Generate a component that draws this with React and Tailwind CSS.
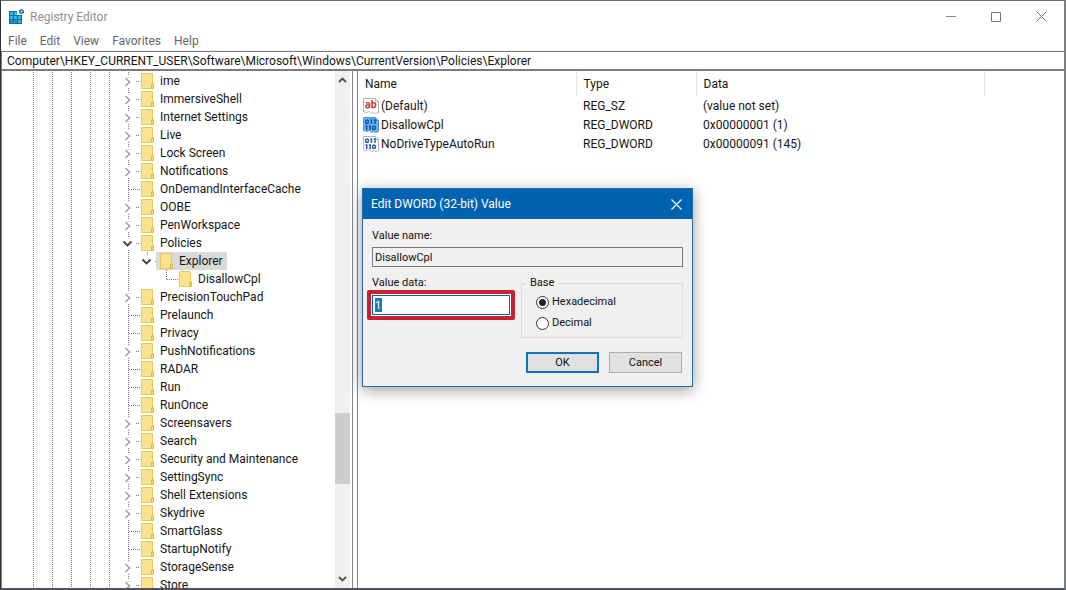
import React, { useState } from "react";

const keys = [
  { name: "ime", closed: true },
  { name: "ImmersiveShell", closed: true },
  { name: "Internet Settings", closed: true },
  { name: "Live", closed: true },
  { name: "Lock Screen", closed: true },
  { name: "Notifications", closed: true },
  { name: "OnDemandInterfaceCache" },
  { name: "OOBE", closed: true },
  { name: "PenWorkspace", closed: true },
  { name: "Policies", open: true },
  { name: "Explorer", open: true, depth: 1, selected: true },
  { name: "DisallowCpl", depth: 2 },
  { name: "PrecisionTouchPad", closed: true },
  { name: "Prelaunch" },
  { name: "Privacy" },
  { name: "PushNotifications", closed: true },
  { name: "RADAR" },
  { name: "Run" },
  { name: "RunOnce" },
  { name: "Screensavers", closed: true },
  { name: "Search", closed: true },
  { name: "Security and Maintenance", closed: true },
  { name: "SettingSync", closed: true },
  { name: "Shell Extensions", closed: true },
  { name: "Skydrive", closed: true },
  { name: "SmartGlass" },
  { name: "StartupNotify" },
  { name: "StorageSense", closed: true },
  { name: "Store", closed: true },
];

const values = [
  { name: "(Default)", type: "REG_SZ", data: "(value not set)", icon: "string" },
  { name: "DisallowCpl", type: "REG_DWORD", data: "0x00000001 (1)", icon: "binary", selected: true },
  { name: "NoDriveTypeAutoRun", type: "REG_DWORD", data: "0x00000091 (145)", icon: "binary" },
];

const menus = ["File", "Edit", "View", "Favorites", "Help"];

const AppIcon = () => (
  <svg width="17" height="16" viewBox="0 0 17 16" aria-hidden="true">
    <path d="M1 2h8v4h5v9H1z" fill="#0e6f9e" />
    <path d="M2 3h3v3H2zM6 3h3v3H6zM2 7h3v3H2zM6 7h3v3H6zM10 7h3v3h-3zM10 11h3v3h-3z" fill="#35b4e6" />
    <path d="M2 11h3v3H2zM6 11h3v3H6z" fill="#1c93c9" />
    <path d="M13.500 0L16 1.300v2.600l-2.500 1.300L11 3.900V1.300z" fill="#2b7f9f" />
    <circle cx="13.500" cy="2.600" r="1" fill="#a8dff0" />
  </svg>
);

const Folder = () => (
  <svg width="13" height="16" viewBox="0 0 13 16" className="shrink-0" aria-hidden="true">
    <path d="M.5.500h11v10h1v5H.5z" fill="#fce28c" stroke="#e6c860" />
    <path d="M10.500 15.500v-4.500h2v4.500z" fill="#fbd96c" stroke="#dfb84a" />
  </svg>
);

const ValueIcon = ({ kind, selected }) => (
  <svg width="16" height="16" viewBox="0 0 16 16" className="shrink-0" aria-hidden="true">
    <path
      d="M.5.500h12l3 3v11l-3 1-2-1-2 1-2-2-3 1-3-1z"
      fill={selected ? "#6cb2ee" : "#fff"}
      stroke={selected ? "#4b98dc" : "#b5b5b5"}
    />
    <path d="M12.500.500v3h3" fill="none" stroke={selected ? "#3f87cc" : "#b5b5b5"} />
    {kind === "string" ? (
      <g fill="none" stroke="#cf4634" strokeWidth="1.600">
        <path d="M3 4.800h2.200q1.300 0 1.300 1.300V10M6.500 7H4.200a1.400 1.400 0 0 0 0 2.800q1.500 0 2.300-1" />
        <path d="M9 2v8M9 5.800q.8-1 1.900-1 1.700 0 1.700 2.300t-1.700 2.300q-1.100 0-1.900-1" />
      </g>
    ) : (
      <g fill="none" stroke={selected ? "#0b55b0" : "#1d5cae"} strokeWidth="1.500">
        <ellipse cx="4" cy="4.700" rx="1.500" ry="1.800" />
        <path d="M8.500 2.200v4.800M7.200 2.900h1.300M12 2.200v4.800M10.700 2.900H12" />
        <path d="M3.700 8.300v4.800M2.400 9h1.300M7.200 8.300v4.800M5.900 9h1.300" />
        <ellipse cx="11" cy="10.700" rx="1.500" ry="1.800" />
      </g>
    )}
  </svg>
);

const Guide = () => (
  <span className="flex w-[19px] shrink-0 justify-center self-stretch">
    <span className="w-px bg-[repeating-linear-gradient(#777_0px_1px,transparent_1px_2px)]" />
  </span>
);

// connector lines in front of a folder, with the expander on top
const Branch = ({ item }) => {
  const expander = item.open || item.closed;
  const last = item.depth > 0;
  return (
    <svg width="18" height="18" viewBox="0 0 18 18" className="shrink-0 overflow-visible" aria-hidden="true">
      <g stroke="#777" strokeDasharray="1 1" fill="none">
        {expander ? (
          <>
            <path d="M9.500 0v3" />
            {!last && <path d="M9.500 16v2" />}
            <path d="M17 9.500h4" />
          </>
        ) : (
          <>
            <path d={last ? "M9.500 0v10" : "M9.500 0v18"} />
            <path d="M10 9.500h11" />
          </>
        )}
      </g>
      {item.closed && <path d="M6.500 6l4 4-4 4" fill="none" stroke="#a3a3a3" strokeWidth="1.700" />}
      {item.open && <path d="M4.500 7.500l4 4 4-4" fill="none" stroke="#404040" strokeWidth="1.800" />}
    </svg>
  );
};

const TreeRow = ({ item }) => {
  const depth = item.depth || 0;
  return (
    <li className="flex h-[18px] items-center" role="treeitem" aria-selected={!!item.selected}>
      <Guide />
      <Guide />
      <Guide />
      <Guide />
      <Guide />
      {depth > 0 && <Guide />}
      {depth > 1 && <span className="w-[19px] shrink-0" />}
      <Branch item={item} />
      <span
        className={`flex h-[18px] items-center gap-1.5 px-1 whitespace-nowrap ${
          item.selected ? "bg-[#d9d9d9]" : ""
        }`}
      >
        <Folder />
        {item.name}
      </span>
    </li>
  );
};

const TitleBar = () => (
  <header className="flex h-[31px] shrink-0 items-center pl-[7px] text-[#8f8f8f]">
    <AppIcon />
    <h1 className="pl-[5px]">Registry Editor</h1>
    <div className="ml-auto flex self-stretch">
      <button aria-label="Minimize" className="flex w-[45px] items-center justify-center">
        <svg width="10" height="10" stroke="#888"><path d="M0 4.500h10" /></svg>
      </button>
      <button aria-label="Maximize" className="flex w-[45px] items-center justify-center">
        <svg width="10" height="10" stroke="#777" fill="none"><path d="M.5.500h9v9h-9z" /></svg>
      </button>
      <button aria-label="Close" className="flex w-[46px] items-center justify-center">
        <svg width="11" height="11" stroke="#777"><path d="M.5.500l10 10M10.500.500l-10 10" /></svg>
      </button>
    </div>
  </header>
);

const EditDialog = () => {
  const [data, setData] = useState("1");
  const [base, setBase] = useState("hex");

  return (
    <div
      role="dialog"
      aria-labelledby="dialog-title"
      className="absolute top-[187px] left-[361px] w-[331px] border border-[#1f6eae] bg-[#f0f0f0] text-[11px] leading-[14px] text-[#111] shadow-[0_3px_14px_rgba(0,0,0,0.4)]"
    >
      <div className="flex h-[30px] items-center justify-between bg-[#0063b1] pl-2 text-white">
        <h2 id="dialog-title" className="text-[12px]">
          Edit DWORD (32-bit) Value
        </h2>
        <button aria-label="Close dialog" className="flex h-[30px] w-8 items-center justify-center">
          <svg width="11" height="11" stroke="#fff" strokeWidth="1.200"><path d="M.5.500l10 10M10.500.500l-10 10" /></svg>
        </button>
      </div>

      <form className="px-[9px] pt-[10px] pb-[13px]" onSubmit={(e) => e.preventDefault()}>
        <label htmlFor="value-name" className="block">Value name:</label>
        <input
          id="value-name"
          readOnly
          value="DisallowCpl"
          className="mt-1 block h-5 w-full border border-[#7a7a7a] bg-[#f0f0f0] px-0.5 outline-none"
        />

        <div className="mt-[9px] flex justify-between">
          <div>
            <label htmlFor="value-data" className="block">Value data:</label>
            <div className="-ml-[5px] h-[30px] w-[148px] rounded-xs border-4 border-[#c8202f] bg-white">
              <div className="relative m-px h-5 border border-[#0063b1]">
                <span className="absolute top-[2px] left-[2px] h-[14px] w-[7px] bg-[#1f7bbf]" />
                <input
                  id="value-data"
                  value={data}
                  onChange={(e) => setData(e.target.value)}
                  className="relative block h-[18px] w-full bg-transparent px-0.5 text-white outline-none"
                />
              </div>
            </div>
          </div>

          <fieldset className="h-[62px] w-[162px] border border-[#dcdcdc] pl-[14px]">
            <legend className="-ml-[10px] px-1">Base</legend>
            <div className="flex flex-col gap-[7px] pt-[5px]">
              <label className="flex items-center gap-[3px]">
                <input
                  type="radio"
                  name="base"
                  checked={base === "hex"}
                  onChange={() => setBase("hex")}
                  className="size-[13px] appearance-none rounded-full border border-[#333] bg-white checked:bg-[radial-gradient(circle,#222_3px,#fff_4px)]"
                />
                Hexadecimal
              </label>
              <label className="flex items-center gap-[3px]">
                <input
                  type="radio"
                  name="base"
                  checked={base === "dec"}
                  onChange={() => setBase("dec")}
                  className="size-[13px] appearance-none rounded-full border border-[#333] bg-white checked:bg-[radial-gradient(circle,#222_3px,#fff_4px)]"
                />
                Decimal
              </label>
            </div>
          </fieldset>
        </div>

        <div className="mt-[14px] flex justify-end gap-[10px] pr-px">
          <button type="submit" className="h-[21px] w-[73px] border-2 border-[#1072b8] bg-[#e1e1e1]">OK</button>
          <button type="button" className="h-[21px] w-[73px] border border-[#adadad] bg-[#e1e1e1]">Cancel</button>
        </div>
      </form>
    </div>
  );
};

const App = () => {
  return (
    <div className="relative flex h-screen flex-col overflow-hidden border-t border-r-2 border-b-2 border-l border-t-[#666] border-r-[#7c7f82] border-b-[#50545a] border-l-[#2c2f3a] bg-white font-[Roboto,sans-serif] text-[12px] leading-[18px] text-[#151515]">
      <TitleBar />
      <nav className="flex h-[19px] shrink-0 items-center gap-[13px] border-b border-[#f0f0f0] pl-[7px] text-[#666]">
        {menus.map((menu) => (
          <button key={menu}>{menu}</button>
        ))}
      </nav>
      <input
        aria-label="Address"
        defaultValue="Computer\HKEY_CURRENT_USER\Software\Microsoft\Windows\CurrentVersion\Policies\Explorer"
        className="h-5 shrink-0 border-t border-b-2 border-l border-[#7c7c7c] px-[5px] outline-none"
      />

      <main className="flex min-h-0 flex-1">
        <section className="flex w-[352px] shrink-0 overflow-hidden border-r border-l border-[#828790]">
          <ul role="tree" aria-label="Registry keys" className="min-w-0 flex-1 overflow-hidden pt-px pl-[22px]">
            {keys.map((item) => (
              <TreeRow key={item.name} item={item} />
            ))}
          </ul>
          <div className="mr-0.5 flex w-[15px] flex-col items-center bg-[#f0f0f0]">
            <button aria-label="Scroll up" className="flex h-[18px] items-center justify-center">
              <svg width="9" height="6" fill="none" stroke="#505050" strokeWidth="1.800"><path d="M1 5l3.500-3.500L8 5" /></svg>
            </button>
            <div className="flex w-full flex-1 flex-col">
              <span className="flex-[325]" />
              <span className="w-full flex-[71] bg-[#cdcdcd]" />
              <span className="flex-[86]" />
            </div>
            <button aria-label="Scroll down" className="flex h-[18px] items-center justify-center">
              <svg width="9" height="6" fill="none" stroke="#505050" strokeWidth="1.800"><path d="M1 1l3.500 3.500L8 1" /></svg>
            </button>
          </div>
        </section>

        <section className="ml-1 min-w-0 flex-1 border-l border-[#828790]">
          <table className="table-fixed border-collapse text-left">
            <thead>
              <tr className="h-[25px]">
                <th className="w-[218px] border-r border-[#e3e3e3] pl-[7px] font-normal">Name</th>
                <th className="w-[120px] border-r border-[#e3e3e3] pl-[7px] font-normal">Type</th>
                <th className="w-[288px] border-r border-[#e3e3e3] pl-[7px] font-normal">Data</th>
              </tr>
            </thead>
            <tbody>
              {values.map((value) => (
                <tr key={value.name} className="h-[19px]">
                  <td className="pl-[5px]">
                    <span className="flex items-center gap-0.5">
                      <ValueIcon kind={value.icon} selected={value.selected} />
                      {value.name}
                    </span>
                  </td>
                  <td className="pl-[7px]">{value.type}</td>
                  <td className="pl-[7px]">{value.data}</td>
                </tr>
              ))}
            </tbody>
          </table>
        </section>
      </main>

      <EditDialog />
    </div>
  );
};

export default App;
